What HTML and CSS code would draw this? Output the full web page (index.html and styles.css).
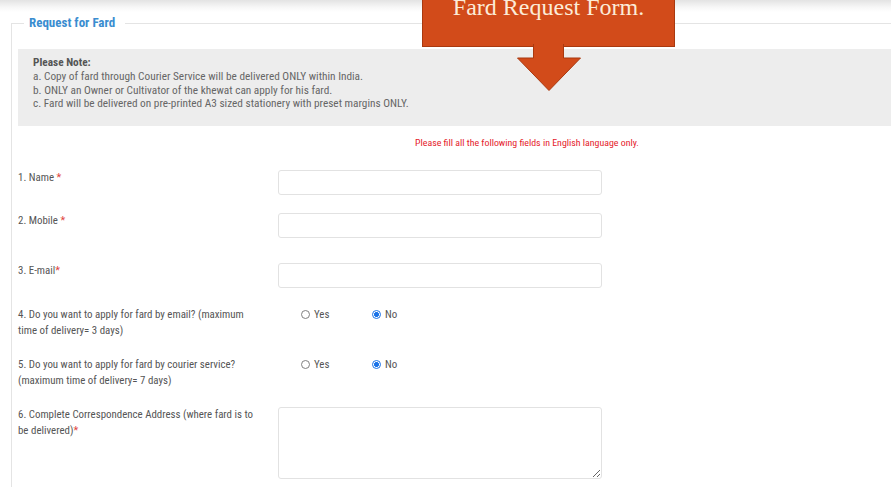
FILE: index.html
```html
<!DOCTYPE html>
<html lang="en">
<head>
<meta charset="utf-8">
<title>Request for Fard</title>
<link rel="stylesheet" href="styles.css">
</head>
<body>
<div class="top-shadow"></div>
<div class="page">
  <fieldset class="panel">
    <legend class="panel-title">Request for Fard</legend>
    <div class="note">
      <p class="note-head">Please Note:</p>
      <p class="note-line">a. Copy of fard through Courier Service will be delivered ONLY within India.</p>
      <p class="note-line">b. ONLY an Owner or Cultivator of the khewat can apply for his fard.</p>
      <p class="note-line">c. Fard will be delivered on pre-printed A3 sized stationery with preset margins ONLY.</p>
    </div>
    <p class="warning">Please fill all the following fields in English language only.</p>

    <div class="row">
      <label class="row-label" for="f-name">1. Name <span class="req">*</span></label>
      <div class="row-field"><input id="f-name" class="text-input" type="text"></div>
    </div>
    <div class="row row-mobile">
      <label class="row-label" for="f-mobile">2. Mobile <span class="req">*</span></label>
      <div class="row-field"><input id="f-mobile" class="text-input" type="text"></div>
    </div>
    <div class="row row-email">
      <label class="row-label" for="f-email">3. E-mail<span class="req">*</span></label>
      <div class="row-field"><input id="f-email" class="text-input" type="text"></div>
    </div>
    <div class="row">
      <div class="row-label">4. Do you want to apply for fard by email? (maximum time of delivery= 3 days)</div>
      <div class="row-field radios">
        <label class="radio-opt"><input class="radio" type="radio" name="byemail"> Yes</label>
        <label class="radio-opt"><input class="radio" type="radio" name="byemail" checked> No</label>
      </div>
    </div>
    <div class="row">
      <div class="row-label">5. Do you want to apply for fard by courier service? (maximum time of delivery= 7 days)</div>
      <div class="row-field radios">
        <label class="radio-opt"><input class="radio" type="radio" name="bycourier"> Yes</label>
        <label class="radio-opt"><input class="radio" type="radio" name="bycourier" checked> No</label>
      </div>
    </div>
    <div class="row">
      <label class="row-label" for="f-address">6. Complete Correspondence Address (where fard is to be delivered)<span class="req">*</span></label>
      <div class="row-field"><textarea id="f-address" class="text-area"></textarea></div>
    </div>
  </fieldset>
</div>

<div class="callout">
  <div class="callout-box">Fard Request Form.</div>
  <svg class="callout-arrow" width="65" height="48" viewBox="0 0 65 48">
    <polygon points="16.5,0 46.5,0 46.5,14 63.5,14 32,46.5 0.5,14 16.5,14" fill="#d24b1a" stroke="#a9390f" stroke-width="1"/>
    <rect x="17" y="0" width="29" height="3" fill="#d24b1a"/>
  </svg>
</div>
</body>
</html>
```

FILE: styles.css
```css
html, body {
  margin: 0;
  padding: 0;
  overflow: hidden;
  background: #fff;
}

body {
  font-family: "Roboto Condensed", "Liberation Sans Narrow", "Arial Narrow", "DejaVu Sans Condensed", Roboto, sans-serif;
  color: #555;
  font-size: 10.9px;
  position: relative;
  height: 487px;
}

.top-shadow {
  height: 12px;
  background: linear-gradient(#e3e3e3, #f7f7f7 60%, #fff);
}

.page {
  padding-left: 11px;
  margin-top: 3px;
}

.panel {
  margin: 0;
  width: 1018px;
  padding: 0 6px 40px 6px;
  border: 1px solid #e4e4e4;
  min-inline-size: 0;
}

.panel-title {
  margin-left: 6px;
  padding: 0 10px 0 5px;
  font-size: 13px;
  line-height: 16px;
  font-weight: bold;
  color: #3a8dd0;
}

.note {
  margin-top: 18px;
  background: #ededed;
  padding: 7px 15px 15px 15px;
  color: #666;
  font-size: 11.3px;
}

.note p {
  margin: 0;
}

.note-head {
  font-weight: bold;
  line-height: 14px;
  color: #555;
}

.note-line {
  line-height: 13.5px;
}

.warning {
  margin: 10px 0 20px 0;
  text-align: center;
  color: #e5212b;
  font-size: 9.9px;
  line-height: 14px;
}

.row {
  display: grid;
  grid-template-columns: 245px 324px;
  column-gap: 15px;
  align-items: start;
  margin-bottom: 18px;
}

.row-mobile {
  margin-bottom: 25px;
}

.row-email {
  margin-bottom: 19px;
}

.row-label {
  line-height: 16px;
  color: #555;
}

.req {
  color: #e0443e;
}

.text-input {
  display: block;
  box-sizing: border-box;
  width: 324px;
  height: 25px;
  margin: 0;
  border: 1px solid #e2e2e2;
  border-radius: 3px;
  background: #fff;
}

.text-area {
  display: block;
  box-sizing: border-box;
  width: 324px;
  height: 72px;
  margin: 0;
  border: 1px solid #e2e2e2;
  border-radius: 3px;
  background: #fff;
}

.radios {
  display: flex;
  padding-left: 23px;
  height: 32px;
}

.radio-opt {
  display: flex;
  align-items: center;
  gap: 4px;
  width: 71px;
  height: 16px;
  line-height: 16px;
  color: #555;
}

.radio {
  appearance: none;
  -webkit-appearance: none;
  box-sizing: border-box;
  width: 9px;
  height: 9px;
  margin: 0;
  border: 1px solid #808080;
  border-radius: 50%;
  background: #fff;
}

.radio:checked {
  border-color: #1a73e8;
  background: radial-gradient(circle, #1a73e8 0 2.2px, #fff 2.6px);
}

.callout {
  position: absolute;
  left: 422px;
  top: -30px;
  width: 253px;
}

.callout-box {
  box-sizing: border-box;
  height: 77px;
  padding-top: 23px;
  background: #d24b1a;
  border: 1px solid #a9390f;
  color: #fcebd8;
  font-family: "Liberation Serif", "DejaVu Serif", serif;
  font-size: 24px;
  line-height: 26px;
  text-align: center;
}

.callout-arrow {
  position: absolute;
  left: 95px;
  top: 74px;
  display: block;
}
```
